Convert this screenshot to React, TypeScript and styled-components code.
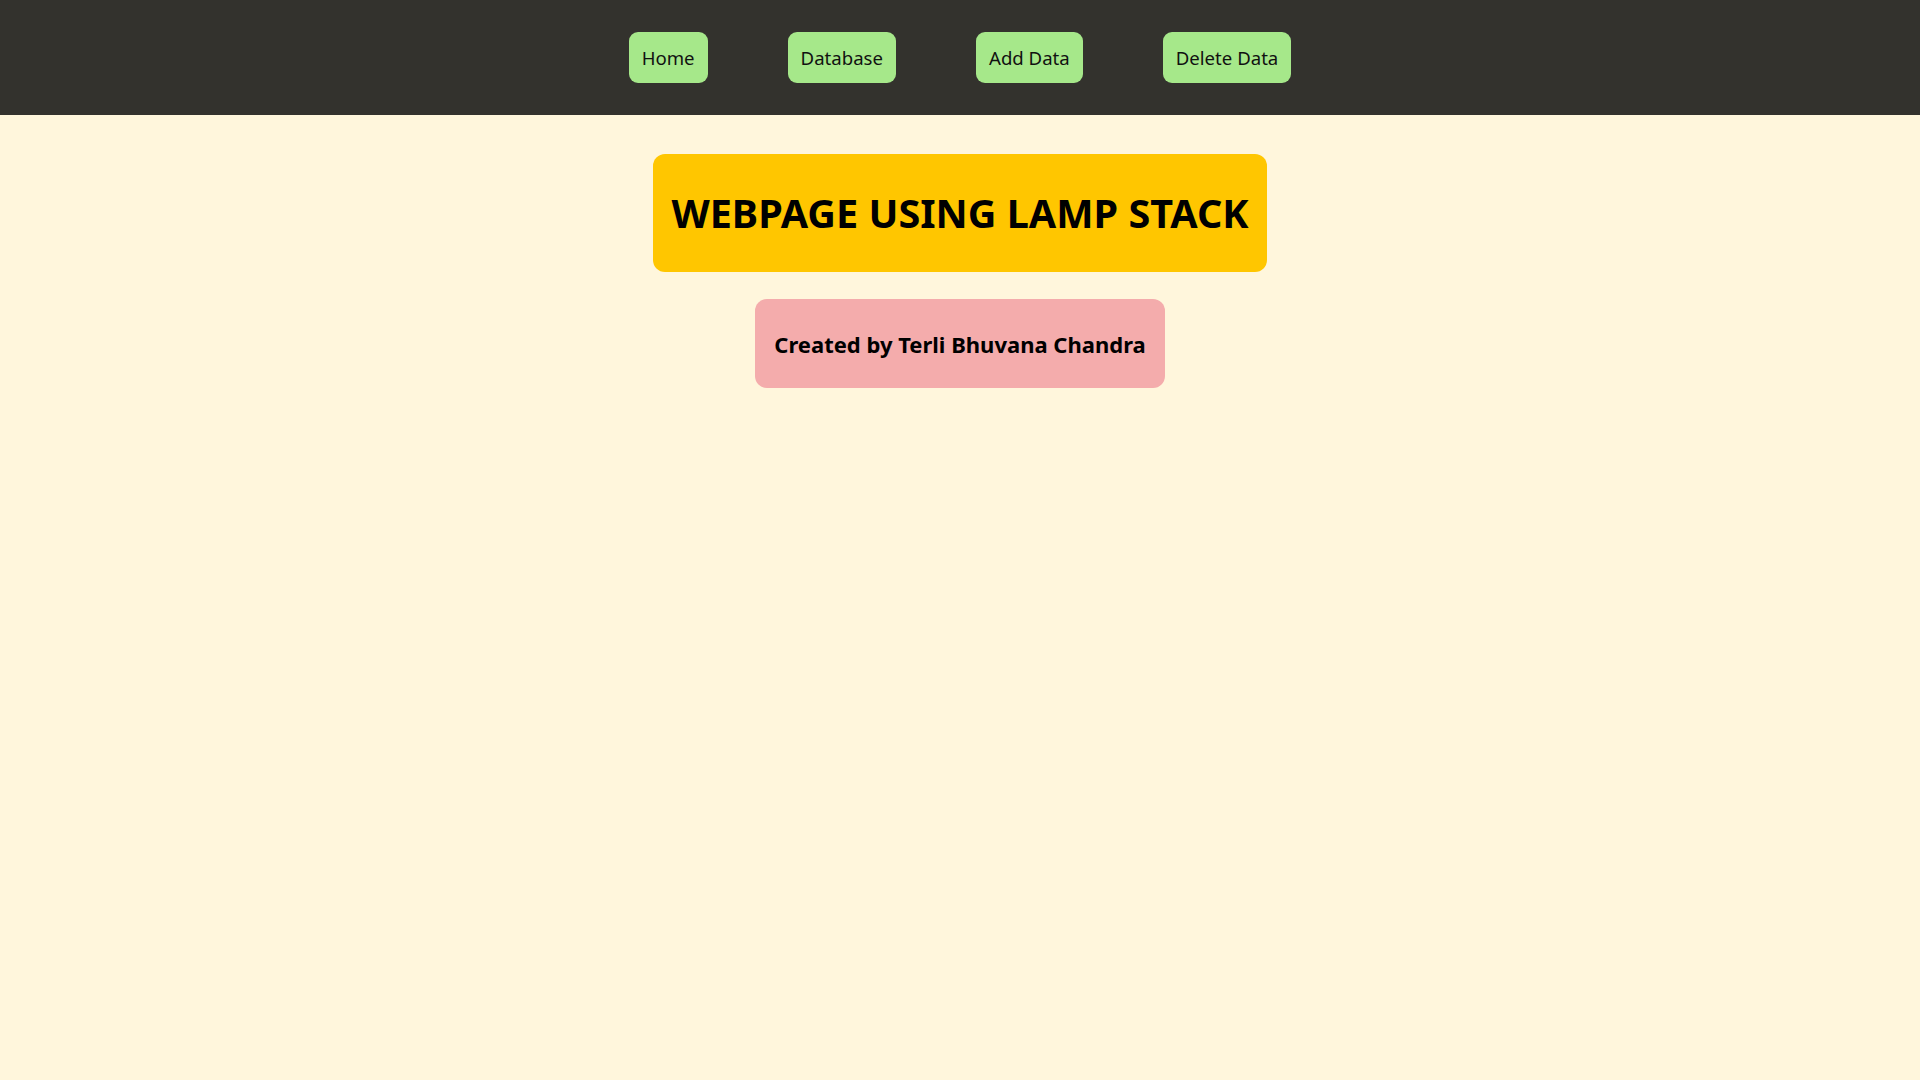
import styled, { createGlobalStyle } from 'styled-components';

const GlobalStyle = createGlobalStyle`
  html, body {
    margin: 0;
    padding: 0;
    background-color: #fff6dc;
    font-family: 'Noto Sans', 'Open Sans', sans-serif;
  }
`;

const NavBar = styled.nav`
  display: flex;
  justify-content: center;
  align-items: center;
  gap: 80px;
  height: 115px;
  background-color: #33322d;
`;

const NavButton = styled.a`
  display: flex;
  align-items: center;
  justify-content: center;
  height: 51px;
  padding: 0 13px;
  box-sizing: border-box;
  border-radius: 9px;
  background-color: #a6e88a;
  color: #111;
  font-size: 18.6px;
  text-decoration: none;
  cursor: pointer;
`;

const Main = styled.main`
  display: flex;
  flex-direction: column;
  align-items: center;
  gap: 27px;
  padding-top: 39px;
`;

interface BannerProps {
  bg: string;
}

const Banner = styled.div<BannerProps>`
  display: flex;
  align-items: center;
  justify-content: center;
  box-sizing: border-box;
  background-color: ${({ bg }) => bg};
  border-radius: 12px;
  color: #000;
  font-weight: 700;
`;

const Title = styled(Banner)`
  height: 118px;
  padding: 0 18px;
  font-size: 39.6px;
`;

const Credit = styled(Banner)`
  height: 89px;
  padding: 0 19px;
  font-size: 22px;
`;

const links = ['Home', 'Database', 'Add Data', 'Delete Data'];

export default function App() {
  return (
    <>
      <GlobalStyle />
      <NavBar>
        {links.map((l) => (
          <NavButton key={l}>{l}</NavButton>
        ))}
      </NavBar>
      <Main>
        <Title bg="#ffc600">WEBPAGE USING LAMP STACK</Title>
        <Credit bg="#f4acac">Created by Terli Bhuvana Chandra</Credit>
      </Main>
    </>
  );
}
